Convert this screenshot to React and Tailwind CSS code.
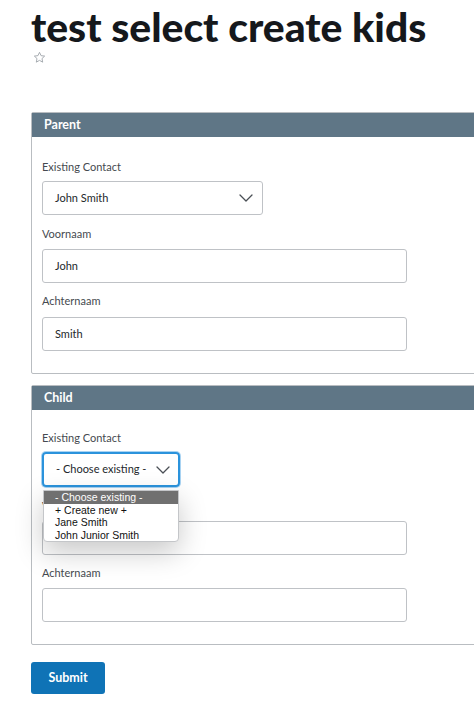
import React from 'react';

const Chevron = () => (
  <svg width="14" height="8" viewBox="0 0 14 8" fill="none" className="shrink-0">
    <path d="M1 1l6 6 6-6" stroke="#4a4f55" strokeWidth="1.3" strokeLinecap="round" strokeLinejoin="round" />
  </svg>
);

const Label = ({ children, className = '' }) => (
  <div className={`h-4 leading-4 text-[11px] text-[#454a50] ${className}`}>{children}</div>
);

const TextInput = ({ value, className = '' }) => (
  <div className={`w-[365px] h-[34px] border border-[#bfc2c6] rounded-[3px] bg-white flex items-center pl-3 text-[11px] text-[#23272b] ${className}`}>
    {value}
  </div>
);

const Fieldset = ({ title, children, className = '' }) => (
  <div className={`w-[470px] border border-[#b9bdc1] rounded-[2px] ${className}`}>
    <div className="h-6 bg-[#5f7686] text-white font-bold text-[12.5px] flex items-center pl-3">{title}</div>
    <div className="pl-[10px]">{children}</div>
  </div>
);

const options = ['- Choose existing -', '+ Create new +', 'Jane Smith', 'John Junior Smith'];

export default function App() {
  return (
    <div className="w-[474px] h-[708px] overflow-hidden bg-white pl-[31px]" style={{ fontFamily: 'Lato, "Noto Sans", sans-serif' }}>
      <h1 className="pt-[6px] text-[40.8px] leading-[42px] font-black text-[#15181c]">test select create kids</h1>
      <div className="mt-[3px] ml-[2px]">
        <svg width="13" height="13" viewBox="0 0 24 24" fill="none" stroke="#9aa0a6" strokeWidth="1.6" strokeLinejoin="round">
          <path d="M12 2.5l2.9 6.1 6.6.8-4.9 4.6 1.3 6.6L12 17.3l-5.9 3.3 1.3-6.6-4.9-4.6 6.6-.8z" />
        </svg>
      </div>

      <Fieldset title="Parent" className="mt-[48px]">
        <Label className="mt-[22px]">Existing Contact</Label>
        <div className="mt-[6px] w-[221px] h-[34px] border border-[#bfc2c6] rounded-[3px] flex items-center justify-between pl-3 pr-[9px] text-[11px] text-[#23272b]">
          <span>John Smith</span>
          <Chevron />
        </div>
        <Label className="mt-[11px]">Voornaam</Label>
        <TextInput value="John" className="mt-[7px]" />
        <Label className="mt-[10px]">Achternaam</Label>
        <TextInput value="Smith" className="mt-[8px]" />
        <div className="h-[22px]" />
      </Fieldset>

      <Fieldset title="Child" className="mt-[11px]">
        <Label className="mt-[20px]">Existing Contact</Label>
        <div className="relative mt-[6px]">
          <div className="w-[138px] h-[35px] border-2 border-[#2b93dc] rounded-[4px] ring-1 ring-[#a9d3f2] flex items-center justify-between pl-3 pr-[8px] text-[11px] text-[#23272b]">
            <span>- Choose existing -</span>
            <Chevron />
          </div>
          <div className="absolute left-[1px] top-[38px] w-[136px] bg-white border border-[#c4c6c9] rounded-b-[4px] shadow-[0_10px_28px_rgba(0,0,0,0.22)] z-10" style={{ fontFamily: '"Liberation Sans", Arial, sans-serif' }}>
            {options.map((o, i) => (
              <div key={o} className={`h-[12.5px] leading-[12.5px] text-[10.5px] pl-[11px] ${i === 0 ? 'bg-[#707070] text-white' : 'text-[#111]'}`}>{o}</div>
            ))}
          </div>
        </div>
        <Label className="mt-[11px]">Voornaam</Label>
        <TextInput value="" className="mt-[7px]" />
        <Label className="mt-[10px]">Achternaam</Label>
        <TextInput value="" className="mt-[7px]" />
        <div className="h-[22px]" />
      </Fieldset>

      <button className="mt-[17px] w-[74px] h-[32px] bg-[#0f73b6] rounded-[3px] text-white font-bold text-[12.5px]">Submit</button>
    </div>
  );
}
